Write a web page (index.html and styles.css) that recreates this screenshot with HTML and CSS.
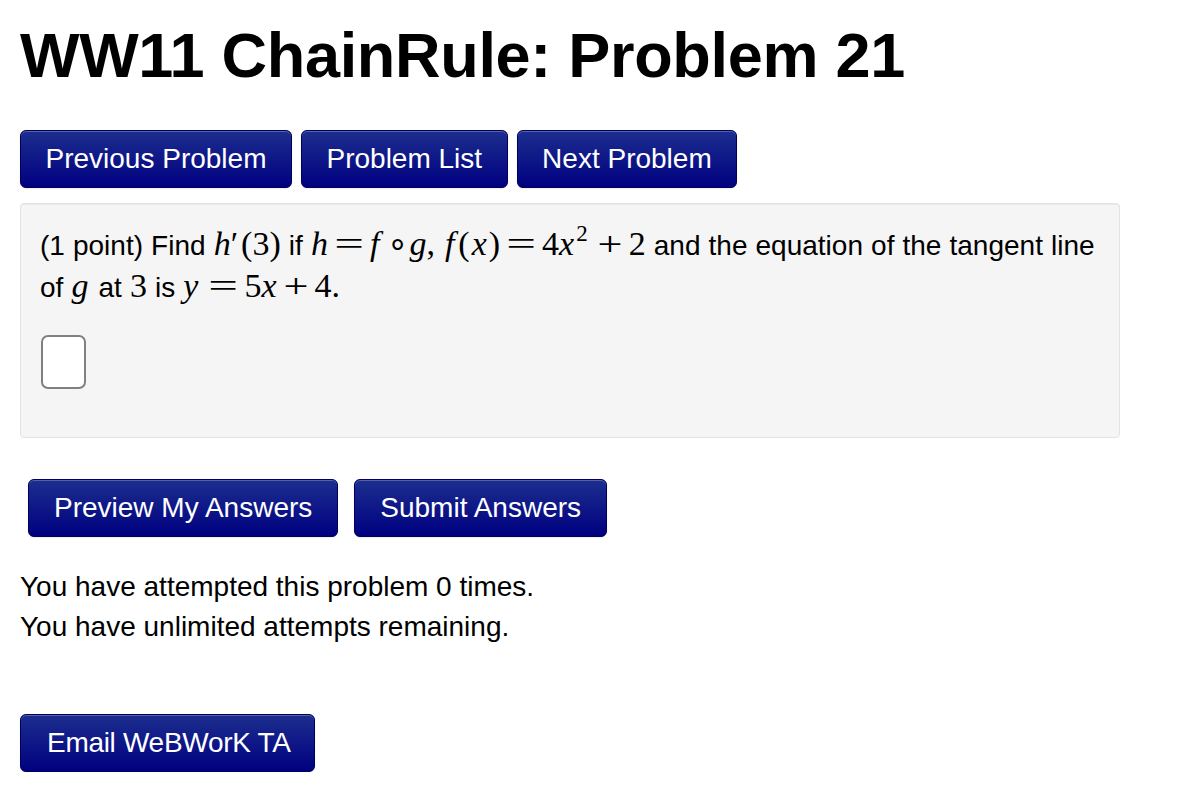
FILE: index.html
```html
<!DOCTYPE html>
<html>
<head>
<meta charset="utf-8">
<title>WW11 ChainRule: Problem 21</title>
<link rel="stylesheet" href="styles.css">
</head>
<body>
<div class="page">
  <h1 class="title">WW11 ChainRule: Problem 21</h1>
  <div class="nav">
    <button class="btn">Previous Problem</button>
    <button class="btn">Problem List</button>
    <button class="btn">Next Problem</button>
  </div>
  <div class="problem">
    <p class="text">(1 point) Find <span class="m"><i>h</i>′<span class="paren">(3)</span></span> if <span class="m"><i>h</i><span class="rel">=</span><i>f</i><span class="bin circ">∘</span><i>g</i><span class="comma">,</span><i class="fn">f</i>(<i class="xv">x</i>)<span class="rel">=</span>4<i>x</i><sup>2</sup><span class="bin plus">+</span>2</span> and the equation of the tangent line<br>of <span class="m"><i class="gv">g</i></span> at <span class="m">3</span> is <span class="m"><i class="yv">y</i><span class="rel">=</span>5<i>x</i><span class="bin plus">+</span>4.</span></p>
    <input class="answer" type="text">
  </div>
  <div class="submit">
    <button class="btn">Preview My Answers</button>
    <button class="btn">Submit Answers</button>
  </div>
  <p class="info">You have attempted this problem 0 times.<br>You have unlimited attempts remaining.</p>
  <div class="email">
    <button class="btn btn-email">Email WeBWorK TA</button>
  </div>
</div>
</body>
</html>
```
FILE: styles.css
```css
html, body {
  margin: 0;
  padding: 0;
  background: #ffffff;
}
body {
  font-family: "Liberation Sans", Arial, Helvetica, sans-serif;
  font-size: 28px;
  color: #000;
}
.page {
  padding: 0 20px;
}
.title {
  margin: 21px 0 0 0;
  font-size: 63px;
  line-height: 69px;
  font-weight: bold;
  letter-spacing: -0.3px;
}
.nav {
  display: flex;
  gap: 9px;
  margin-top: 40px;
}
.btn {
  font-family: "Liberation Sans", Arial, Helvetica, sans-serif;
  font-size: 28px;
  line-height: 40px;
  padding: 8px 24.5px;
  color: #ffffff;
  border: 1px solid #00005e;
  border-radius: 6px;
  background-color: #00007f;
  background-image: linear-gradient(to bottom, #1c2e8e 0%, #000080 100%);
  box-shadow: inset 0 1px 0 rgba(255,255,255,0.25), 0 1px 2px rgba(0,0,0,0.08);
  cursor: pointer;
}
.btn-email {
  letter-spacing: -0.3px;
  padding: 8px 23px 8px 26px;
}
.problem {
  margin-top: 15px;
  width: 1100px;
  box-sizing: border-box;
  background: #f5f5f5;
  border: 1px solid #e3e3e3;
  border-radius: 4px;
  box-shadow: inset 0 1px 1px rgba(0,0,0,0.05);
  padding: 21px 19px 48px 19px;
}
.text {
  margin: 0;
  line-height: 42px;
  word-spacing: 0.3px;
}
.m {
  font-family: "Liberation Serif", "Times New Roman", serif;
  font-size: 34px;
  line-height: 1;
  word-spacing: 0;
}
.m i {
  font-style: italic;
}
.m .fn {
  margin-right: 4px;
}
.m .xv {
  margin: 0 2px;
}
.m .gv {
  margin-right: 2px;
}
.m .yv {
  margin-right: 4px;
}
.m .paren {
  margin-left: 3px;
}
.m .rel {
  display: inline-block;
  width: 30px;
  margin: 0 6px;
  text-align: center;
  transform: scaleX(1.55);
}
.m .bin {
  display: inline-block;
  text-align: center;
}
.m .plus {
  width: 22px;
  margin: 0 8px;
  transform: scaleX(1.3);
}
.m sup + .plus {
  margin-left: 11px;
}
.m .circ {
  width: 14px;
  margin: 0 8px;
}
.m .comma {
  margin-right: 10px;
}
.m sup {
  font-size: 23px;
  line-height: 0;
  vertical-align: 14px;
  margin-left: 2px;
}
.answer {
  display: block;
  margin-top: 26px;
  margin-left: 1px;
  width: 45px;
  height: 54px;
  box-sizing: border-box;
  border: 2px solid #808080;
  border-radius: 7px;
  background: #ffffff;
  padding: 0;
}
.submit {
  display: flex;
  gap: 16px;
  margin-top: 41px;
  padding-left: 8px;
}
.submit .btn {
  padding: 8px 25px;
}
.info {
  margin: 30px 0 0 0;
  line-height: 40px;
}
.email {
  margin-top: 67px;
  display: flex;
}
```
